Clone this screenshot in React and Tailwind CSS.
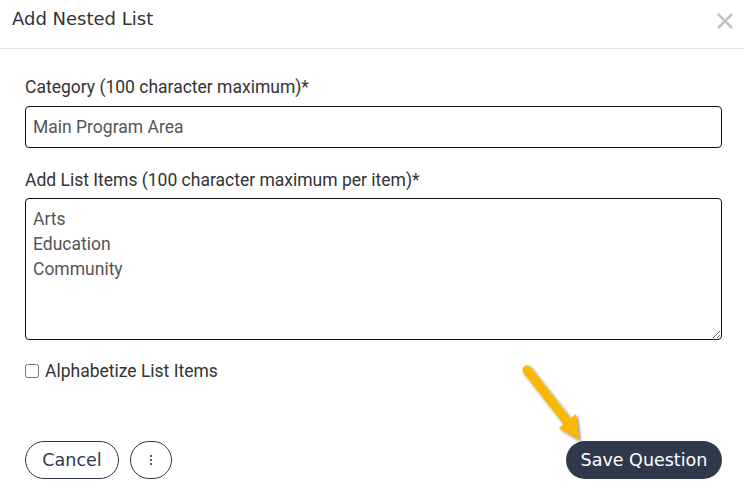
import { useState } from "react";

const body = { fontFamily: "Roboto, 'Liberation Sans', sans-serif" };
const heading = { fontFamily: "'DejaVu Sans', Lato, sans-serif" };

function Arrow() {
  return (
    <svg
      className="pointer-events-none absolute left-[512px] top-[358px]"
      width="80"
      height="90"
      viewBox="0 0 80 90"
    >
      <defs>
        <filter id="sh" x="-30%" y="-30%" width="160%" height="160%">
          <feDropShadow dx="1.5" dy="1.5" stdDeviation="1.4" floodColor="#000" floodOpacity="0.55" />
        </filter>
      </defs>
      <g filter="url(#sh)">
        <line x1="15" y1="12" x2="58" y2="67" stroke="#fbb800" strokeWidth="9" strokeLinecap="round" />
        <polygon points="47,70 64,56 67,82" fill="#fbb800" />
      </g>
    </svg>
  );
}

export default function App() {
  const [category, setCategory] = useState("Main Program Area");
  const [items, setItems] = useState("Arts\nEducation\nCommunity");
  const [alpha, setAlpha] = useState(false);

  return (
    <div className="relative h-[504px] w-[744px] overflow-hidden bg-white text-[#333]" style={body}>
      <div className="flex h-[49px] items-start justify-between border-b border-[#e5e5e5] pl-[12px] pr-[10px] pt-[7px]">
        <h4 className="text-[18px] leading-[24px] text-[#333]" style={heading}>
          Add Nested List
        </h4>
        <button className="mt-[5px] text-[#bbb]">
          <svg width="18" height="18" viewBox="0 0 18 18">
            <path d="M2 2L16 16M16 2L2 16" stroke="#c2c2c2" strokeWidth="2.6" />
          </svg>
        </button>
      </div>

      <div className="pl-[25px] pr-[22px] pt-[27px]">
        <label className="block text-[17.5px] leading-[22px] text-[#333]">
          Category (100 character maximum)*
        </label>
        <input
          value={category}
          onChange={(e) => setCategory(e.target.value)}
          className="mt-[8px] block h-[42px] w-[697px] rounded-[4px] border border-[#111] px-[7px] text-[17.5px] text-[#555] outline-none"
        />

        <label className="mt-[21px] block text-[17.5px] leading-[22px] text-[#333]">
          Add List Items (100 character maximum per item)*
        </label>
        <textarea
          value={items}
          onChange={(e) => setItems(e.target.value)}
          className="mt-[7px] block h-[142px] w-[697px] rounded-[4px] border border-[#111] px-[7px] pb-[6px] pt-[8px] text-[17.5px] leading-[25px] text-[#555] outline-none"
        />

        <label className="mt-[19px] flex items-center gap-[6px] text-[17.5px] leading-[24px] text-[#333]">
          <input
            type="checkbox"
            checked={alpha}
            onChange={(e) => setAlpha(e.target.checked)}
            className="h-[14px] w-[14px]"
          />
          Alphabetize List Items
        </label>

        <div className="mt-[58px] flex items-center justify-between">
          <div className="flex items-center gap-[11px]">
            <button
              className="h-[38px] w-[94px] rounded-full border border-[#2e3a4b] text-[17.5px] text-[#2e3a4b]"
              style={heading}
            >
              Cancel
            </button>
            <button className="flex h-[38px] w-[42px] items-center justify-center rounded-full border border-[#2e3a4b]">
              <svg width="4" height="12" viewBox="0 0 4 12">
                <circle cx="2" cy="2" r="1.1" fill="#2e3a4b" />
                <circle cx="2" cy="6" r="1.1" fill="#2e3a4b" />
                <circle cx="2" cy="10" r="1.1" fill="#2e3a4b" />
              </svg>
            </button>
          </div>
          <button
            className="h-[38px] w-[156px] rounded-full bg-[#2e3a4b] text-[17.5px] text-white"
            style={heading}
          >
            Save Question
          </button>
        </div>
      </div>

      <Arrow />
    </div>
  );
}
